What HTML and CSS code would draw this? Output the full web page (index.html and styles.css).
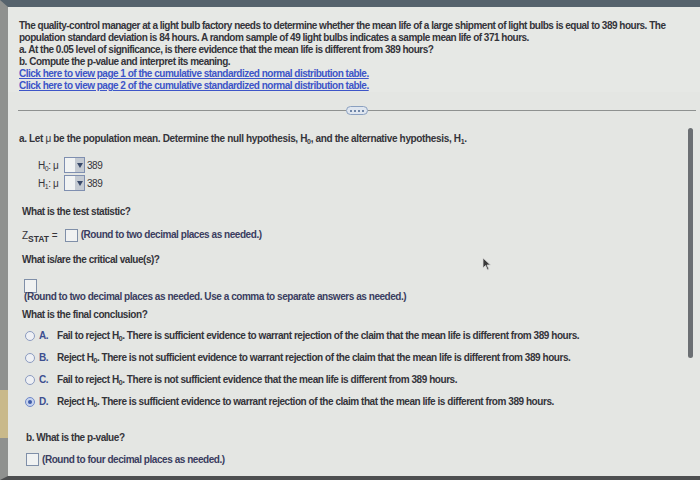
FILE: index.html
```html
<!DOCTYPE html>
<html>
<head>
<meta charset="utf-8">
<link rel="stylesheet" href="styles.css">
</head>
<body>
<div class="screen">
  <div class="page">
    <div class="problem">
      <p>The quality-control manager at a light bulb factory needs to determine whether the mean life of a large shipment of light bulbs is equal to 389 hours. The</p>
      <p>population standard deviation is 84 hours. A random sample of 49 light bulbs indicates a sample mean life of 371 hours.</p>
      <p>a. At the 0.05 level of significance, is there evidence that the mean life is different from 389 hours?</p>
      <p>b. Compute the p-value and interpret its meaning.</p>
      <p><a class="link">Click here to view page 1 of the cumulative standardized normal distribution table.</a></p>
      <p><a class="link">Click here to view page 2 of the cumulative standardized normal distribution table.</a></p>
    </div>
    <div class="divider"><span class="line"></span><span class="pill"><i></i><i></i><i></i><i></i></span><span class="line"></span></div>
    <div class="part-a">
      <p class="intro">a. Let <span class="mu">μ</span> be the population mean. Determine the null hypothesis, H<sub>0</sub>, and the alternative hypothesis, H<sub>1</sub>.</p>
      <div class="hyp">
        <div class="hrow"><span class="hl">H<sub>0</sub>: <span class="mu">μ</span></span><span class="select"><span class="arrow"></span></span><span class="val">389</span></div>
        <div class="hrow"><span class="hl">H<sub>1</sub>: <span class="mu">μ</span></span><span class="select"><span class="arrow"></span></span><span class="val">389</span></div>
      </div>
      <p class="q q-stat">What is the test statistic?</p>
      <div class="zrow"><span class="z">Z<sub>STAT</sub> =</span><span class="box"></span><span class="note">(Round to two decimal places as needed.)</span></div>
      <p class="q q-crit">What is/are the critical value(s)?</p>
      <span class="box box-crit"></span>
      <p class="note note-crit">(Round to two decimal places as needed. Use a comma to separate answers as needed.)</p>
      <p class="q q-final">What is the final conclusion?</p>
      <ul class="options">
        <li><span class="radio"></span><span class="letter">A.</span><span>Fail to reject H<sub>0</sub>. There is sufficient evidence to warrant rejection of the claim that the mean life is different from 389 hours.</span></li>
        <li><span class="radio"></span><span class="letter">B.</span><span>Reject H<sub>0</sub>. There is not sufficient evidence to warrant rejection of the claim that the mean life is different from 389 hours.</span></li>
        <li><span class="radio"></span><span class="letter">C.</span><span>Fail to reject H<sub>0</sub>. There is not sufficient evidence that the mean life is different from 389 hours.</span></li>
        <li><span class="radio checked"></span><span class="letter">D.</span><span>Reject H<sub>0</sub>. There is sufficient evidence to warrant rejection of the claim that the mean life is different from 389 hours.</span></li>
      </ul>
    </div>
    <div class="part-b">
      <p class="q">b. What is the p-value?</p>
      <div class="prow"><span class="box"></span><span class="note">(Round to four decimal places as needed.)</span></div>
    </div>
  </div>
  <div class="scrollbar"></div>
  <div class="sticky"></div>
  <svg class="cursor" width="10" height="14" viewBox="0 0 10 14"><path d="M1 1 L1 11 L3.5 8.5 L5.5 13 L7 12.3 L5 8 L8.5 8 Z" fill="#3a3a3a" stroke="#d8d8d8" stroke-width="0.8"/></svg>
</div>
</body>
</html>
```
FILE: styles.css
```css
html, body {
  margin: 0;
  padding: 0;
  width: 700px;
  height: 480px;
  overflow: hidden;
  background: #8d8f8e;
}
.screen {
  position: relative;
  width: 700px;
  height: 480px;
  box-sizing: border-box;
  border-top: 7px solid #56636d;
  border-left: 8px solid #8f918f;
  border-bottom: 4px solid #4d4f50;
  background: #e4e6e3;
  font-family: "Liberation Sans", Arial, sans-serif;
  font-weight: bold;
  color: #34343a;
  font-size: 10px;
  letter-spacing: -0.45px;
  white-space: nowrap;
}
.page {
  display: flex;
  flex-direction: column;
}
p { margin: 0; }
sub { font-size: 7px; vertical-align: -2px; line-height: 0; }
.problem {
  padding: 13px 0 0 11px;
  line-height: 12px;
  letter-spacing: -0.5px;
  background: #e6e8e5;
}
.link {
  color: #3d55c8;
  text-decoration: underline;
}
.divider {
  display: flex;
  align-items: center;
  margin: 14px 0 0 10px;
  width: 678px;
}
.divider .line {
  flex: 1;
  height: 1px;
  background: #8e9190;
}
.pill {
  display: flex;
  gap: 2px;
  align-items: center;
  justify-content: center;
  width: 20px;
  height: 7px;
  border: 1px solid #8aa0c0;
  border-radius: 5px;
  background: #dfe6ef;
}
.pill i {
  width: 2px;
  height: 2px;
  background: #6f86a8;
}
.part-a {
  padding: 18px 0 0 11px;
  display: flex;
  flex-direction: column;
  align-items: flex-start;
}
.intro { line-height: 12px; letter-spacing: -0.35px; }
.mu { font-weight: normal; }
.hyp {
  margin: 12px 0 0 19px;
  display: flex;
  flex-direction: column;
  gap: 2px;
  font-weight: normal;
}
.hrow {
  display: flex;
  align-items: center;
  height: 16px;
}
.hl { flex: none; width: 26px; }
.select {
  flex: none;
  width: 21px;
  height: 16px;
  box-sizing: border-box;
  border: 1px solid #7f8fb0;
  background: #f1f3f3;
  display: flex;
  justify-content: flex-end;
  align-items: center;
  margin-right: 2px;
}
.arrow {
  width: 9px;
  height: 14px;
  background: #c4cad2;
  display: flex;
  align-items: center;
  justify-content: center;
}
.arrow::after {
  content: "";
  border-left: 3px solid transparent;
  border-right: 3px solid transparent;
  border-top: 5px solid #3a4a6a;
}
.q { line-height: 12px; }
.q-stat { margin: 15px 0 0 3px; }
.zrow {
  display: flex;
  align-items: center;
  margin: 11px 0 0 3px;
  height: 12px;
}
.z { font-weight: normal; margin-right: 7px; letter-spacing: 0; }
.z sub { font-size: 8.5px; font-weight: bold; vertical-align: -3px; }
.box {
  display: inline-block;
  flex: none;
  width: 11px;
  height: 11px;
  border: 1px solid #7f8fa8;
  background: #f0f2f2;
  margin-right: 3px;
}
.note { color: #3a3d60; line-height: 12px; }
.q-crit { margin: 13px 0 0 3px; }
.box-crit { margin: 13px 0 0 5px; width: 11px; height: 12px; }
.note-crit { margin: -2px 0 0 5px; }
.q-final { margin: 6px 0 0 3px; }
.options {
  list-style: none;
  margin: 9px 0 0 0;
  padding: 0 0 0 6px;
  display: flex;
  flex-direction: column;
  gap: 10px;
}
.options li {
  display: flex;
  align-items: center;
  height: 12px;
  line-height: 12px;
}
.radio {
  flex: none;
  width: 8px;
  height: 8px;
  border: 1px solid #8b9bc0;
  border-radius: 50%;
  background: #eef0f4;
  margin-right: 4px;
  display: flex;
  align-items: center;
  justify-content: center;
}
.radio.checked::after {
  content: "";
  width: 4px;
  height: 4px;
  border-radius: 50%;
  background: #3e5ba8;
}
.radio.checked { background: #c6d3ee; border-color: #6f88c8; }
.letter { flex: none; width: 18px; color: #3d4f90; }
.part-b {
  padding: 24px 0 0 18px;
  display: flex;
  flex-direction: column;
  align-items: flex-start;
}
.prow {
  display: flex;
  align-items: center;
  margin-top: 9px;
}
.scrollbar {
  position: absolute;
  left: 680px;
  top: 121px;
  width: 5px;
  height: 230px;
  border-radius: 3px;
  background: #6b6f73;
}
.sticky {
  position: absolute;
  left: -8px;
  top: 383px;
  width: 8px;
  height: 48px;
  background: #c9b98a;
}
.cursor {
  position: absolute;
  left: 474px;
  top: 250px;
}
```
